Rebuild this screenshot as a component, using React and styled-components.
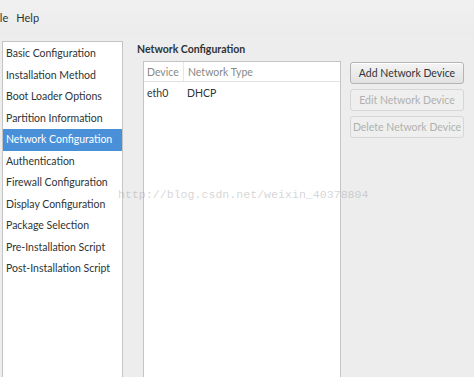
import styled, { createGlobalStyle } from 'styled-components';

const Global = createGlobalStyle`
    html, body {
        margin: 0;
        padding: 0;
        background: #ededed;
    }
    body {
        font-family: Lato, "Noto Sans", sans-serif;
        font-size: 10.5px;
        color: #2e3436;
    }
`;

const Fenster = styled.div`
    position: relative;
    width: 474px;
    height: 377px;
    overflow: hidden;
    background: #ededed;
    display: flex;
    flex-direction: column;
`;

const MenuBar = styled.div`
    height: 36px;
    display: flex;
    align-items: center;
    gap: 8px;
    padding-bottom: 1px;
    box-sizing: border-box;
    background: linear-gradient(#f0f0f0, #ececec);
    font-size: 11px;
`;

const MenuItem = styled.span`
    margin-left: ${p => p.offset || 0}px;
`;

const Main = styled.div`
    flex: 1;
    display: flex;
    padding-top: 5px;
    min-height: 0;
`;

const Sidebar = styled.ul`
    list-style: none;
    margin: 0 0 0 2px;
    padding: 1px 0 0;
    width: 121px;
    background: #fff;
    border: 1px solid #c4c4c4;
    border-bottom: none;
    box-sizing: border-box;
    flex-shrink: 0;
`;

const SideItem = styled.li`
    height: 21.5px;
    line-height: 21.5px;
    padding-left: 3px;
    white-space: nowrap;
    background: ${p => (p.active ? '#4a90d9' : 'transparent')};
    color: ${p => (p.active ? '#fff' : '#2e3436')};
`;

const Content = styled.div`
    flex: 1;
    display: flex;
    flex-direction: column;
    padding-left: 14px;
`;

const Heading = styled.div`
    font-weight: bold;
    height: 15px;
    line-height: 15px;
    margin-top: 1px;
`;

const Body = styled.div`
    flex: 1;
    display: flex;
    gap: 9px;
    padding-left: 6px;
    margin-top: 4px;
`;

const Tabelle = styled.div`
    width: 198px;
    background: #fff;
    border: 1px solid #c4c4c4;
    border-bottom: none;
    box-sizing: border-box;
`;

const Row = styled.div`
    display: grid;
    grid-template-columns: 39px 1fr;
    height: ${p => (p.head ? 20 : 22)}px;
    line-height: ${p => (p.head ? 20 : 22)}px;
    color: ${p => (p.head ? '#888a85' : '#2e3436')};
    border-bottom: ${p => (p.head ? '1px solid #e2e2e2' : 'none')};
    box-sizing: border-box;
`;

const Cell = styled.span`
    padding-left: ${p => (p.first ? 3 : 4)}px;
    border-left: ${p => (p.divider ? '1px solid #e6e6e6' : 'none')};
`;

const Buttons = styled.div`
    display: flex;
    flex-direction: column;
    gap: 5px;
    padding-top: 1px;
`;

const Button = styled.button`
    width: 114px;
    height: 22px;
    padding: 0;
    white-space: nowrap;
    font-family: Lato, "Noto Sans", sans-serif;
    font-size: 10.5px;
    border: 1px solid ${p => (p.disabled ? '#d6d6d6' : '#b4b4b4')};
    border-radius: 3px;
    background: ${p => (p.disabled ? '#efefef' : 'linear-gradient(#f4f4f4, #e2e2e2)')};
    color: ${p => (p.disabled ? '#b0b2ae' : '#2e3436')};
    box-shadow: ${p => (p.disabled ? 'none' : 'inset 0 1px #fff')};
`;

const Watermark = styled.div`
    position: absolute;
    left: 118px;
    top: 188px;
    font-family: "Liberation Mono", monospace;
    font-size: 11.6px;
    color: rgba(160, 160, 160, 0.45);
    pointer-events: none;
    white-space: nowrap;
`;

const sections = [
    'Basic Configuration',
    'Installation Method',
    'Boot Loader Options',
    'Partition Information',
    'Network Configuration',
    'Authentication',
    'Firewall Configuration',
    'Display Configuration',
    'Package Selection',
    'Pre-Installation Script',
    'Post-Installation Script',
];

function App() {
    return (
        <Fenster>
            <Global />
            <MenuBar>
                <MenuItem offset={-9}>File</MenuItem>
                <MenuItem>Help</MenuItem>
            </MenuBar>
            <Main>
                <Sidebar>
                    {sections.map(s => (
                        <SideItem key={s} active={s === 'Network Configuration'}>{s}</SideItem>
                    ))}
                </Sidebar>
                <Content>
                    <Heading>Network Configuration</Heading>
                    <Body>
                        <Tabelle>
                            <Row head>
                                <Cell first>Device</Cell>
                                <Cell divider>Network Type</Cell>
                            </Row>
                            <Row>
                                <Cell first>eth0</Cell>
                                <Cell>DHCP</Cell>
                            </Row>
                        </Tabelle>
                        <Buttons>
                            <Button>Add Network Device</Button>
                            <Button disabled>Edit Network Device</Button>
                            <Button disabled>Delete Network Device</Button>
                        </Buttons>
                    </Body>
                </Content>
            </Main>
            <Watermark>http://blog.csdn.net/weixin_40378804</Watermark>
        </Fenster>
    );
}

export default App;
